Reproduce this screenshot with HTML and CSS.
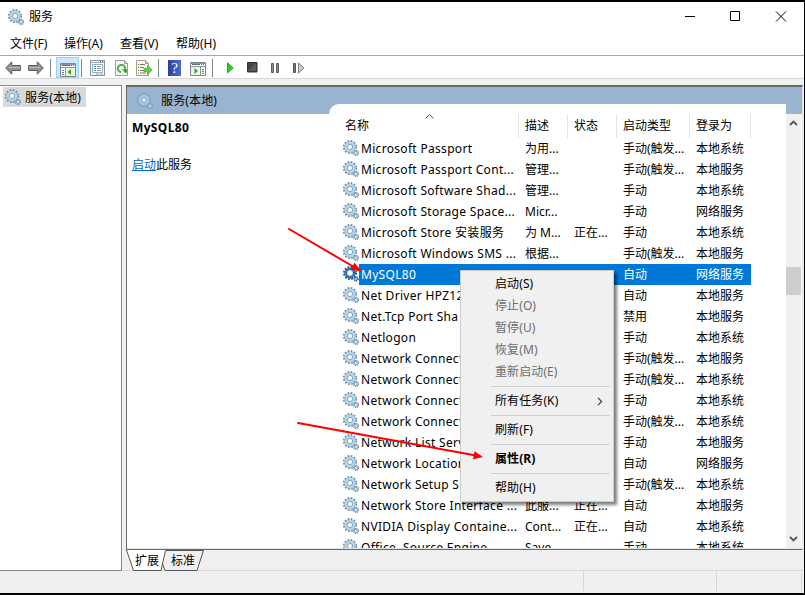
FILE: index.html
```html
<!DOCTYPE html>
<html lang="zh-CN">
<head>
  <meta charset="utf-8">
  <title>服务</title>
  <link rel="stylesheet" href="styles.css">
</head>
<body>

<svg class="defs" width="0" height="0">
  <symbol id="gear" viewBox="0 0 16 16">
    <circle cx="7" cy="7" r="6.2" fill="none" stroke="#6487a3" stroke-width="1.7" stroke-dasharray="1.7 1.55"/>
    <circle cx="7" cy="7" r="4.2" fill="#fff" stroke="#b4d6ea" stroke-width="2.8"/>
    <circle cx="7" cy="7" r="5.5" fill="none" stroke="#85a7bf" stroke-width=".5"/>
    <circle cx="7" cy="7" r="2.6" fill="#fff" stroke="#6489a5" stroke-width=".8"/>
    <circle cx="13" cy="13" r="2.5" fill="none" stroke="#6d8ca5" stroke-width="1.3" stroke-dasharray="1.1 .86"/>
    <circle cx="13" cy="13" r="1.6" fill="#e4f2fa" stroke="#8fb2ca" stroke-width="1.2"/>
  </symbol>
  <symbol id="gear-sel" viewBox="0 0 16 16">
    <circle cx="7" cy="7" r="6" fill="none" stroke="#1f5688" stroke-width="2" stroke-dasharray="1.7 1.44"/>
    <circle cx="7" cy="7" r="4.1" fill="#fff" stroke="#4a93cf" stroke-width="2.8"/>
    <circle cx="7" cy="7" r="4.4" fill="none" stroke="#125a9c" stroke-width="2.4" stroke-dasharray="1 1"/>
    <circle cx="13" cy="13" r="2" fill="#8bbde5" stroke="#1f5688" stroke-width="1.5" stroke-dasharray="1 .8"/>
  </symbol>
</svg>

<div class="window">
  <div class="titlebar">
    <svg class="gear"><use href="#gear"/></svg>
    <span class="title">服务</span>
    <svg class="controls" width="110" height="28" fill="none" stroke="#000">
      <path d="M4 14.5h10M49.500 9.500h9v9h-9zM95 9.500l10 10M105 9.500l-10 10"/>
    </svg>
  </div>

  <div class="menubar">
    <span>文件(F)</span>
    <span>操作(A)</span>
    <span>查看(V)</span>
    <span>帮助(H)</span>
  </div>

  <div class="toolbar">
    <svg class="back" width="16" height="14"><path d="M.7 7l6-6.200v3.700h8.700v5h-8.700v3.700z" fill="#929292" stroke="#5d5d5d"/><path d="M4 6.500h11" stroke="#bcbcbc"/></svg>
    <svg class="forward" width="16" height="14"><path d="M15.300 7l-6-6.200v3.700H.6v5h8.700v3.700z" fill="#929292" stroke="#5d5d5d"/><path d="M1 6.500h11" stroke="#bcbcbc"/></svg>
    <i class="sep s1"></i>
    <span class="pressed">
      <svg width="16" height="14"><path d="M.5.5h15v13H.5z" fill="#fff" stroke="#7d8793"/><path d="M1 1.500h14M1 4.500h14" stroke="#8b95a1"/><path d="M2 2.500h8M11 2.500h1M13 2.500h1" stroke="#5f6c79"/><path d="M5.500 5v8" stroke="#8b95a1"/><path d="M2 7.500h2M2 9.500h2M2 11.500h2" stroke="#5d7c9b"/><path d="M6 5h9v8H6z" fill="#edf6e6"/><path d="M11 6v6L7.500 9z" fill="#2caa27"/></svg>
    </span>
    <i class="sep s2"></i>
    <svg class="props" width="15" height="16"><path d="M.5.5h14v15H.5z" fill="#f5f8fa" stroke="#8a939c"/><path d="M1 2.500h13" stroke="#9ca8b3"/><path d="M10 1.500h1M12 1.500h1" stroke="#536676"/><path d="M2.500 4.500h10v8h-10z" fill="#fff" stroke="#9eafbe"/><path d="M4 6.500h2M4 8.500h2M4 10.500h2" stroke="#3e8ebb"/><path d="M7 6.500h4M7 8.500h4M7 10.500h4M6 14h3M10 14h3" stroke="#8da0b0"/></svg>
    <svg class="refresh" width="13" height="16"><path d="M.5.5h9l3 3v12H.5z" fill="#f4f6f2" stroke="#9aa0a0"/><path d="M9.500.5v3h3" fill="none" stroke="#9aa0a0"/><path d="M6 12.200A3.700 3.700 0 1 1 10.100 9" fill="none" stroke="#36ae3c" stroke-width="1.800"/><path d="M7 9.200h5.300l-1 4.500z" fill="#229e2b"/></svg>
    <svg class="export" width="17" height="16"><path d="M.5.5h9l3 3v12H.5z" fill="#fffbe2" stroke="#a2a190"/><path d="M9.500.5v3h3" fill="none" stroke="#a2a190"/><path d="M2 4.500h1M2 7.500h1M2 10.500h1M2 13h1M4 4.500h5M4 7.500h4M4 10.500h4M4 13h6" stroke="#6e756f"/><path d="M8 8.500h3.500v-3l4.700 4.500-4.700 4.500v-3H8z" fill="#6bc750" stroke="#49a938" stroke-width=".8"/></svg>
    <i class="sep s3"></i>
    <span class="help">?</span>
    <svg class="panel" width="16" height="14"><path d="M.5.5h15v13H.5z" fill="#fff" stroke="#7d8793"/><path d="M1 1.500h14M1 4.500h14" stroke="#8b95a1"/><path d="M2 2.500h8M11 2.500h1M13 2.500h1" stroke="#5f6c79"/><path d="M10.500 5v8" stroke="#8b95a1"/><path d="M12 7.500h2M12 9.500h2M12 11.500h2" stroke="#5d7c9b"/><path d="M1 5h9v8H1z" fill="#edf6e6"/><path d="M4.500 6v6L8 9z" fill="#2caa27"/></svg>
    <i class="sep s4"></i>
    <svg class="play" width="7" height="12"><path d="M.5.800v10L6.200 6z" fill="#37cc29" stroke="#22a81b"/></svg>
    <svg class="stop" width="11" height="11"><path d="M.5.5h9.500v9.500H.5z" fill="#454545" stroke="#303030"/><path d="M1 9L9 1v8z" fill="#5c5c5c"/></svg>
    <svg class="pause" width="8" height="10" fill="#8b8b8b" stroke="#5e5e5e"><path d="M.5.5h2v9h-2zM5.500.5h2v9h-2z"/></svg>
    <svg class="step" width="12" height="12"><path d="M.5 1.500h2v9h-2z" fill="#777" stroke="#555"/><path d="M5.500 1v10l5.500-5z" fill="#ccc" stroke="#808080"/></svg>
  </div>

  <div class="main">
    <div class="tree">
      <div class="node"><svg class="gear"><use href="#gear"/></svg><span>服务(本地)</span></div>
    </div>

    <div class="right">
      <div class="pane">
        <div class="banner"><svg class="gear"><use href="#gear"/></svg><span>服务(本地)</span></div>
        <div class="content">
          <div class="detail">
            <h1>MySQL80</h1>
            <p><a>启动</a>此服务</p>
          </div>
          <div class="list">
            <div class="head">
              <div>名称<svg class="sort" width="9" height="5"><path d="M.5 4.500l4-4 4 4" fill="none" stroke="#555"/></svg></div>
              <div>描述</div><div>状态</div><div>启动类型</div><div>登录为</div>
            </div>
            <div class="row"><svg class="gear"><use href="#gear"/></svg><b>Microsoft Passport</b><span>为用...</span><span></span><span>手动(触发...</span><span>本地系统</span></div>
            <div class="row"><svg class="gear"><use href="#gear"/></svg><b>Microsoft Passport Cont...</b><span>管理...</span><span></span><span>手动(触发...</span><span>本地服务</span></div>
            <div class="row"><svg class="gear"><use href="#gear"/></svg><b>Microsoft Software Shad...</b><span>管理...</span><span></span><span>手动</span><span>本地系统</span></div>
            <div class="row"><svg class="gear"><use href="#gear"/></svg><b>Microsoft Storage Space...</b><span>Micr...</span><span></span><span>手动</span><span>网络服务</span></div>
            <div class="row"><svg class="gear"><use href="#gear"/></svg><b>Microsoft Store 安装服务</b><span>为 M...</span><span>正在...</span><span>手动</span><span>本地系统</span></div>
            <div class="row"><svg class="gear"><use href="#gear"/></svg><b>Microsoft Windows SMS ...</b><span>根据...</span><span></span><span>手动(触发...</span><span>本地服务</span></div>
            <div class="row selected"><svg class="gear"><use href="#gear-sel"/></svg><b>MySQL80</b><span></span><span></span><span>自动</span><span>网络服务</span></div>
            <div class="row"><svg class="gear"><use href="#gear"/></svg><b>Net Driver HPZ12</b><span></span><span></span><span>自动</span><span>本地服务</span></div>
            <div class="row"><svg class="gear"><use href="#gear"/></svg><b>Net.Tcp Port Sha</b><span></span><span></span><span>禁用</span><span>本地服务</span></div>
            <div class="row"><svg class="gear"><use href="#gear"/></svg><b>Netlogon</b><span></span><span></span><span>手动</span><span>本地系统</span></div>
            <div class="row"><svg class="gear"><use href="#gear"/></svg><b>Network Connect</b><span></span><span></span><span>手动(触发...</span><span>本地服务</span></div>
            <div class="row"><svg class="gear"><use href="#gear"/></svg><b>Network Connect</b><span></span><span></span><span>手动(触发...</span><span>本地系统</span></div>
            <div class="row"><svg class="gear"><use href="#gear"/></svg><b>Network Connect</b><span></span><span></span><span>手动</span><span>本地系统</span></div>
            <div class="row"><svg class="gear"><use href="#gear"/></svg><b>Network Connect</b><span></span><span></span><span>手动(触发...</span><span>本地系统</span></div>
            <div class="row"><svg class="gear"><use href="#gear"/></svg><b>Network List Serv</b><span></span><span></span><span>手动</span><span>本地服务</span></div>
            <div class="row"><svg class="gear"><use href="#gear"/></svg><b>Network Location</b><span></span><span></span><span>自动</span><span>网络服务</span></div>
            <div class="row"><svg class="gear"><use href="#gear"/></svg><b>Network Setup S</b><span></span><span></span><span>手动(触发...</span><span>本地系统</span></div>
            <div class="row"><svg class="gear"><use href="#gear"/></svg><b>Network Store Interface ...</b><span>此服...</span><span>正在...</span><span>自动</span><span>本地服务</span></div>
            <div class="row"><svg class="gear"><use href="#gear"/></svg><b>NVIDIA Display Containe...</b><span>Cont...</span><span>正在...</span><span>自动</span><span>本地系统</span></div>
            <div class="row"><svg class="gear"><use href="#gear"/></svg><b>Office&nbsp; Source Engine</b><span>Save...</span><span></span><span>手动</span><span>本地系统</span></div>
          </div>
          <div class="scrollbar">
            <svg width="9" height="6"><path d="M1 5l3.500-3.500L8 5" fill="none" stroke="#555" stroke-width="1.800"/></svg>
            <i class="thumb"></i>
            <svg width="9" height="6"><path d="M1 1l3.500 3.500L8 1" fill="none" stroke="#555" stroke-width="1.800"/></svg>
          </div>
        </div>
      </div>
      <div class="tabs">
        <svg class="tab-shape" width="80" height="22">
          <path d="M39 20.500L35.500 11 39.500.5H77.500L71 20.500z" fill="#f0f0f0" stroke="#555"/>
          <path d="M0 0L7.500 20.500h27.500L40 0z" fill="#fff"/>
          <path d="M.5 0l7 20.500h27.500L39.500.5" fill="none" stroke="#555"/>
        </svg>
        <span>扩展</span><span>标准</span>
      </div>
    </div>
  </div>

  <div class="statusbar"><i></i><i></i><i></i></div>
</div>

<div class="popup">
  <div class="item">启动(S)</div>
  <div class="item off">停止(O)</div>
  <div class="item off">暂停(U)</div>
  <div class="item off">恢复(M)</div>
  <div class="item off">重新启动(E)</div>
  <hr>
  <div class="item">所有任务(K)<svg width="6" height="9"><path d="M1 .8l3.700 3.700L1 8.200" fill="none" stroke="#333" stroke-width="1.100"/></svg></div>
  <hr>
  <div class="item">刷新(F)</div>
  <hr>
  <div class="item default">属性(R)</div>
  <hr>
  <div class="item">帮助(H)</div>
</div>

<svg class="arrows" width="805" height="595">
  <g stroke="#f00" stroke-width="2" stroke-linecap="round">
    <path d="M289 229l65 38M298 423l178 32.500"/>
  </g>
  <path d="M362 271.500l-11.500-1.800 4-7zM483 457l-10 2.300 1.500-8z" fill="#f00"/>
</svg>

</body>
</html>
```

FILE: styles.css
```css
* {
  box-sizing: border-box;
}

body {
  margin: 0;
  background: #000;
  color: #000;
  font: 12px/16px "Noto Sans", "Noto Sans CJK SC", sans-serif;
  white-space: nowrap;
  overflow: hidden;
}

svg {
  display: block;
  flex: none;
}

.defs {
  position: absolute;
}

.gear {
  width: 16px;
  height: 16px;
}

.window {
  display: flex;
  flex-direction: column;
  width: 804px;
  height: 593px;
  background: #f0f0f0;
  border-top: 2px solid #000;
}

.titlebar {
  display: flex;
  align-items: center;
  height: 28px;
  padding: 1px 0 0 8px;
  background: #fff;
}

.title {
  margin-left: 5px;
}

.controls {
  margin: -1px 13px 0 auto;
}

.menubar {
  display: flex;
  height: 26px;
  padding: 6px 0 0 10px;
  background: #fff;
  border-bottom: 1px solid #a7a7ab;
}

.menubar span {
  width: 54px;
}

.menubar span:nth-child(n+2) {
  width: 56px;
}

.toolbar {
  display: flex;
  align-items: center;
  height: 23px;
  padding-top: 1px;
  background: #fff;
  border-bottom: 1px solid #d8d8d8;
}

.back { margin-left: 5px; }
.forward { margin-left: 7px; }
.props { margin-left: 8px; }
.refresh { margin-left: 10px; }
.export { margin-left: 8px; }
.panel { margin: 2px 0 0 9px; }
.play { margin-left: 14px; }
.stop { margin-left: 13px; }
.pause { margin-left: 13px; }
.step { margin-left: 14px; }

.sep {
  flex: none;
  width: 1px;
  height: 18px;
  background: #858585;
}

.s1 { margin-left: 6px; }
.s2 { margin-left: 2px; }
.s3 { margin-left: 5px; }
.s4 { margin-left: 6px; }

.pressed {
  width: 23px;
  height: 21px;
  margin-left: 5px;
  padding: 5px 0 0 3px;
  background: #cce8ff;
  border: 1px solid #99d1ff;
}

.help {
  width: 13px;
  height: 16px;
  margin-left: 9px;
  background: linear-gradient(90deg, #2c3f9c, #4d6ed0);
  color: #fff;
  font: 15px/16px "Liberation Serif", serif;
  text-align: center;
}

.main {
  display: flex;
  height: 492px;
  padding-top: 6px;
  border-bottom: 1px solid #d7d7d7;
}

.tree {
  width: 122px;
  height: 486px;
  padding: 1px 0 0 3px;
  background: #fff;
  border: 1px solid #828790;
  border-left: 0;
}

.node {
  display: flex;
  align-items: center;
  width: 83px;
  height: 20px;
  padding-left: 2px;
  background: #d9d9d9;
  letter-spacing: .15px;
}

.node span {
  margin: 1px 0 0 4px;
}

.right {
  width: 677px;
  margin-left: 4px;
}

.pane {
  height: 465px;
  background: #fff;
  border: solid #696969;
  border-width: 2px 0 1px 1px;
  border-right: 1px solid #e3e3e3;
  overflow: hidden;
}

.banner {
  display: flex;
  align-items: center;
  height: 27px;
  padding-left: 10px;
  background: #99b4d1;
  letter-spacing: .15px;
}

.banner span {
  margin: 1px 0 0 8px;
}

.banner .gear {
  opacity: .6;
}

.content {
  display: flex;
  height: 435px;
  border-bottom: 1px solid #e3e3e3;
}

.detail {
  width: 202px;
  padding: 6px 0 0 5px;
}

.detail h1 {
  margin: 0 0 21px;
  font-size: 12px;
  line-height: 16px;
  letter-spacing: .35px;
}

.detail p {
  margin: 0;
}

.detail a {
  color: #0066cc;
  text-decoration: underline;
}

/* the list rises into the blue banner, with one round corner */
.list {
  width: 457px;
  height: 444px;
  margin-top: -10px;
  background: #fff;
  border-top-left-radius: 10px;
  overflow: hidden;
}

.head {
  display: grid;
  grid-template-columns: 190px 49px 49px 73px 61px;
  height: 34px;
  padding-top: 10px;
}

.head div {
  position: relative;
  height: 24px;
  padding-left: 6px;
  border-right: 1px solid #e5e5e5;
  line-height: 24px;
}

.head div:first-child {
  padding-left: 16px;
}

.sort {
  position: absolute;
  left: 96px;
  top: 0;
}

.row {
  display: grid;
  grid-template-columns: 16px 159px 49px 49px 73px 61px;
  width: 408px;
  height: 21px;
  margin-left: 14px;
  line-height: 22px;
}

.row .gear {
  margin-top: 2px;
}

.row b {
  padding-left: 2px;
  font-weight: normal;
  letter-spacing: .31px;
}

.row span {
  padding-left: 7px;
}

.selected {
  background: linear-gradient(90deg, #fff 16px, #0078d7 16px);
  color: #fff;
}

.scrollbar {
  display: flex;
  flex-direction: column;
  align-items: center;
  width: 15px;
  height: 434px;
  padding: 6px 0;
  background: #f0f0f0;
}

.thumb {
  width: 15px;
  height: 28px;
  margin: 141px 0 auto;
  background: #cdcdcd;
}

.tabs {
  display: flex;
  position: relative;
  height: 21px;
  padding-left: 9px;
  line-height: 21px;
}

.tab-shape {
  position: absolute;
  left: 0;
  top: 0;
}

.tabs span {
  position: relative;
  width: 36px;
}

.statusbar {
  display: flex;
  height: 21px;
  padding: 1px 2px 1px 0;
}

.statusbar i {
  width: 133px;
  border-right: 1px solid #d7d7d7;
}

.statusbar i:first-child {
  width: 584px;
}

.statusbar i:last-child {
  width: 85px;
}

.popup {
  position: absolute;
  left: 460px;
  top: 270px;
  width: 154px;
  height: 232px;
  padding: 2px;
  background: #f0f0f0;
  border: 1px solid #ccc;
  box-shadow: 3px 3px 3px rgba(0, 0, 0, .5);
}

.item {
  display: flex;
  align-items: center;
  height: 22px;
  padding: 0 8px 0 32px;
  letter-spacing: .1px;
}

.item svg {
  margin-left: auto;
}

.off {
  color: #6d6d6d;
}

.default {
  font-weight: bold;
}

.popup hr {
  height: 1px;
  margin: 3px 1px 3px 28px;
  border: 0;
  background: #d0d0d0;
}

.arrows {
  position: absolute;
  left: 0;
  top: 0;
}
```
